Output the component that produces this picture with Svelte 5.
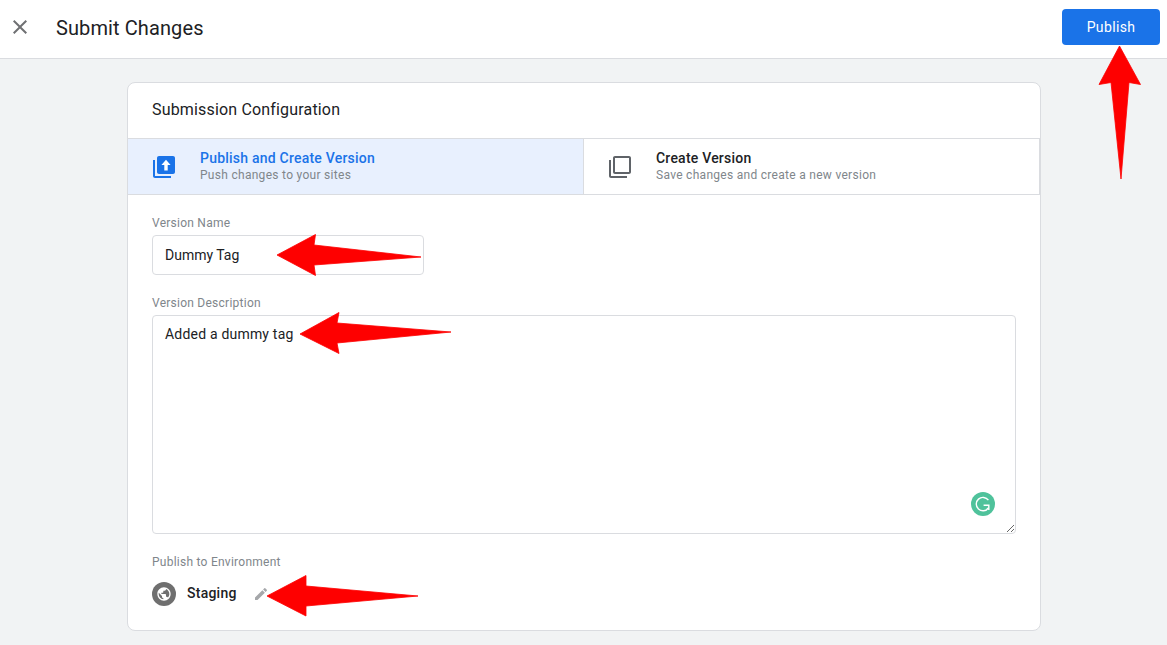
<script lang="ts">
	// red callout arrows drawn over the form, in page coordinates
	const arrows = [
		'1119.5,46 1099,84.5 1111,82.5 1121,179 1129,82.5 1140.5,84.5',
		'277,255 315.5,234.5 314,245 421,257 314,265 315.5,275.5',
		'300,334 339,312.5 337,323 451,332 337,343 339,353.5',
		'267,596 306,575.5 306,586 418,596 306,606 306,616'
	];
</script>

<div class="page">
	<header>
		<button class="close" aria-label="Close">
			<svg viewBox="0 0 24 24" width="24" height="24"><path d="M19 6.41 17.59 5 12 10.59 6.41 5 5 6.41 10.59 12 5 17.59 6.41 19 12 13.41 17.59 19 19 17.59 13.41 12z" /></svg>
		</button>
		<h1>Submit Changes</h1>
		<button class="publish">Publish</button>
	</header>

	<main>
		<section class="card">
			<h2>Submission Configuration</h2>

			<div class="tabs">
				<div class="tab active">
					<svg viewBox="0 0 24 24" width="24" height="24">
						<path d="M3 5H1v16c0 1.1.9 2 2 2h16v-2H3V5z" />
						<path d="M21 1H7c-1.1 0-2 .9-2 2v14c0 1.1.9 2 2 2h14c1.1 0 2-.9 2-2V3c0-1.1-.9-2-2-2z" />
						<path class="up" d="M14 4.8 9.4 10h2.9v5.4h3.4V10h2.9z" />
					</svg>
					<div class="tab-text">
						<div class="tab-title">Publish and Create Version</div>
						<div class="tab-sub">Push changes to your sites</div>
					</div>
				</div>
				<div class="tab">
					<svg viewBox="0 0 24 24" width="24" height="24">
						<path d="M3 5H1v16c0 1.1.9 2 2 2h16v-2H3V5zm18-4H7c-1.1 0-2 .9-2 2v14c0 1.1.9 2 2 2h14c1.1 0 2-.9 2-2V3c0-1.1-.9-2-2-2zm0 16H7V3h14v14z" />
					</svg>
					<div class="tab-text">
						<div class="tab-title">Create Version</div>
						<div class="tab-sub">Save changes and create a new version</div>
					</div>
				</div>
			</div>

			<div class="form">
				<label for="version-name">Version Name</label>
				<input id="version-name" type="text" value="Dummy Tag" readonly />

				<label for="version-desc" class="desc-label">Version Description</label>
				<div class="desc-wrap">
					<textarea id="version-desc" readonly>Added a dummy tag</textarea>
					<span class="grammarly">
						<svg viewBox="0 0 24 24" width="24" height="24">
							<circle cx="12" cy="12" r="12" fill="#4fc29b" />
							<path d="M17.4 8.2A6.7 6.7 0 1 0 17.4 16" fill="none" stroke="#fff" stroke-width="1.4" />
							<path d="M12.6 13.2h5.2v4.8" fill="none" stroke="#fff" stroke-width="1.4" />
						</svg>
					</span>
				</div>

				<div class="env-label">Publish to Environment</div>
				<div class="env">
					<span class="globe">
						<svg viewBox="0 0 24 24" width="16" height="16">
							<path d="M12 2C6.48 2 2 6.48 2 12s4.48 10 10 10 10-4.48 10-10S17.52 2 12 2zm-1 17.93c-3.95-.49-7-3.85-7-7.93 0-.62.08-1.21.21-1.79L9 15v1c0 1.1.9 2 2 2v1.93zm6.9-2.54c-.26-.81-1-1.39-1.9-1.39h-1v-3c0-.55-.45-1-1-1H8v-2h2c.55 0 1-.45 1-1V7h2c1.1 0 2-.9 2-2v-.41c2.93 1.19 5 4.06 5 7.41 0 2.08-.8 3.97-2.1 5.39z" />
						</svg>
					</span>
					<span class="env-name">Staging</span>
					<svg class="pencil" viewBox="0 0 24 24" width="16" height="16">
						<path d="M3 17.25V21h3.75L17.81 9.94l-3.75-3.75L3 17.25zM20.71 7.04a1 1 0 0 0 0-1.41l-2.34-2.34a1 1 0 0 0-1.41 0l-1.83 1.83 3.75 3.75 1.83-1.83z" />
					</svg>
				</div>
			</div>
		</section>
	</main>

	<svg class="arrows" viewBox="0 0 1167 645" width="1167" height="645" aria-hidden="true">
		{#each arrows as points}
			<polygon {points} />
		{/each}
	</svg>
</div>

<style>
	:global(body) {
		margin: 0;
		background: #f1f3f4;
		font-family: Roboto, "Liberation Sans", sans-serif;
		color: #202124;
	}

	.page {
		position: relative;
		width: 1167px;
		height: 645px;
		overflow: hidden;
		background: #f1f3f4;
	}

	header {
		display: flex;
		align-items: center;
		height: 58px;
		background: #fff;
		border-bottom: 1px solid #dadce0;
	}

	.close {
		display: flex;
		margin: -4px 0 0 8px;
		padding: 0;
		border: 0;
		background: none;
	}

	.close svg {
		fill: #6f7073;
	}

	h1 {
		margin: -2px 0 0 24px;
		font-size: 20px;
		font-weight: 400;
		line-height: 28px;
		letter-spacing: 0.1px;
		flex: 1;
	}

	.publish {
		width: 98px;
		height: 36px;
		margin: -4px 7px 0 0;
		border: 0;
		border-radius: 4px;
		background: #1a73e8;
		color: #fff;
		font-family: inherit;
		font-size: 14px;
		font-weight: 400;
		letter-spacing: 0.35px;
	}

	main {
		padding: 23px 126px 0 127px;
	}

	.card {
		height: 547px;
		background: #fff;
		border: 1px solid #dadce0;
		border-radius: 8px;
	}

	h2 {
		margin: 0;
		padding: 0 24px;
		height: 55px;
		font-size: 16px;
		font-weight: 400;
		line-height: 54px;
		letter-spacing: 0.17px;
		color: #202124;
	}

	.tabs {
		display: grid;
		grid-template-columns: 456px 456px;
		height: 55px;
		border-top: 1px solid #dadce0;
		border-bottom: 1px solid #dadce0;
	}

	.tab {
		display: flex;
		align-items: center;
		gap: 24px;
		padding-left: 24px;
		box-sizing: border-box;
		border-right: 1px solid #dadce0;
	}

	.tab svg {
		fill: #5f6368;
		flex: none;
	}

	.tab.active {
		background: #e8f0fe;
	}

	.tab.active svg {
		fill: #1a73e8;
	}

	.tab.active svg .up {
		fill: #fff;
	}

	.tab-text {
		padding-bottom: 2px;
	}

	.tab-title {
		font-size: 14px;
		font-weight: 500;
		line-height: 18px;
		letter-spacing: 0.22px;
		color: #202124;
	}

	.active .tab-title {
		color: #1a73e8;
	}

	.tab-sub {
		font-size: 12px;
		line-height: 16px;
		letter-spacing: 0.29px;
		color: #80868b;
	}

	.form {
		display: flex;
		flex-direction: column;
		align-items: flex-start;
		padding: 20px 24px 0;
	}

	label,
	.env-label {
		font-size: 12px;
		line-height: 16px;
		letter-spacing: 0.25px;
		color: #80868b;
		margin-bottom: 4px;
	}

	input,
	textarea {
		box-sizing: border-box;
		border: 1px solid #dadce0;
		border-radius: 4px;
		padding: 0 12px;
		background: #fff;
		color: #202124;
		font-family: inherit;
		font-size: 14px;
		letter-spacing: 0.2px;
		outline: none;
	}

	input {
		width: 272px;
		height: 40px;
		letter-spacing: 0;
	}

	.desc-label {
		margin-top: 20px;
	}

	.desc-wrap {
		position: relative;
		display: flex;
	}

	textarea {
		width: 864px;
		height: 219px;
		padding-top: 10px;
		line-height: 16px;
	}

	.grammarly {
		position: absolute;
		right: 21px;
		bottom: 18px;
		display: flex;
	}

	.env-label {
		margin-top: 20px;
		margin-bottom: 12px;
	}

	.env {
		display: flex;
		align-items: center;
		height: 24px;
	}

	.globe {
		display: flex;
		align-items: center;
		justify-content: center;
		width: 24px;
		height: 24px;
		border-radius: 50%;
		background: #6f6f6f;
	}

	.globe svg {
		fill: #fff;
	}

	.env-name {
		margin: -2px 0 0 11px;
		font-size: 14px;
		font-weight: 500;
		letter-spacing: 0.25px;
		color: #202124;
	}

	.pencil {
		margin-left: 16px;
		fill: #a5a7aa;
	}

	.arrows {
		position: absolute;
		left: 0;
		top: 0;
		pointer-events: none;
	}

	.arrows polygon {
		fill: #fe0000;
		stroke: #fe0000;
		stroke-width: 0.8;
		stroke-linejoin: round;
	}
</style>
